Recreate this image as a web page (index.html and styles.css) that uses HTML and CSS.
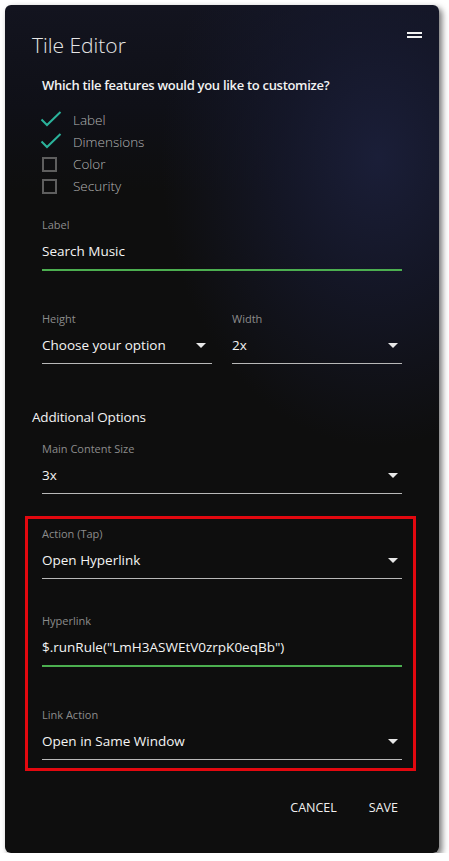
FILE: index.html
```html
<!DOCTYPE html>
<html>
<head>
<meta charset="utf-8">
<link rel="stylesheet" href="styles.css">
</head>
<body>
<div class="panel">
  <div class="header">
    <h1 class="title">Tile Editor</h1>
    <div class="menu"><span></span><span></span></div>
  </div>
  <div class="content">
    <div class="question">Which tile features would you like to customize?</div>
    <ul class="checks">
      <li class="check on"><svg class="tick" viewBox="0 0 22 16" width="22" height="16"><path d="M1.5 8.5 L7 14 L20.5 1" fill="none" stroke="#2bb39b" stroke-width="2"/></svg><span>Label</span></li>
      <li class="check on"><svg class="tick" viewBox="0 0 22 16" width="22" height="16"><path d="M1.5 8.5 L7 14 L20.5 1" fill="none" stroke="#2bb39b" stroke-width="2"/></svg><span>Dimensions</span></li>
      <li class="check"><i class="box"></i><span>Color</span></li>
      <li class="check"><i class="box"></i><span>Security</span></li>
    </ul>

    <div class="field active f-label">
      <div class="flabel">Label</div>
      <div class="fvalue">Search Music</div>
    </div>

    <div class="row">
      <div class="field select">
        <div class="flabel">Height</div>
        <div class="fvalue">Choose your option<i class="caret half"></i></div>
      </div>
      <div class="field select">
        <div class="flabel">Width</div>
        <div class="fvalue">2x<i class="caret"></i></div>
      </div>
    </div>

    <div class="section">Additional Options</div>

    <div class="field select">
      <div class="flabel">Main Content Size</div>
      <div class="fvalue">3x<i class="caret"></i></div>
    </div>

    <div class="highlight">
      <div class="field select">
        <div class="flabel">Action (Tap)</div>
        <div class="fvalue">Open Hyperlink<i class="caret"></i></div>
      </div>
      <div class="field active f-link">
        <div class="flabel">Hyperlink</div>
        <div class="fvalue">$.runRule("LmH3ASWEtV0zrpK0eqBb")</div>
      </div>
      <div class="field select f-action">
        <div class="flabel">Link Action</div>
        <div class="fvalue">Open in Same Window<i class="caret"></i></div>
      </div>
    </div>

    <div class="buttons">
      <button class="btn">CANCEL</button>
      <button class="btn">SAVE</button>
    </div>
  </div>
</div>
</body>
</html>
```

FILE: styles.css
```css
* { box-sizing: border-box; }
html, body { margin: 0; padding: 0; background: #ffffff; }
body {
  font-family: "Open Sans", "Noto Sans", "Liberation Sans", sans-serif;
  color: #eeeeee;
}
.panel {
  margin: 5px 0 0 5px;
  width: 434px;
  height: 848px;
  border-radius: 6px;
  background:
    radial-gradient(ellipse 50% 34% at 86% 18%, rgba(27,31,58,0.95) 0%, rgba(22,25,46,0.75) 45%, rgba(14,14,14,0) 100%),
    linear-gradient(180deg, #13141f 0%, #0f1017 12%, #0e0e0e 22%);
  box-shadow: 3px 3px 6px rgba(0,0,0,0.55);
  padding-top: 25px;
}
.header {
  display: flex;
  justify-content: space-between;
  align-items: flex-start;
  padding: 0 17px 0 27px;
}
.title {
  margin: 0;
  font-size: 21px;
  font-weight: 300;
  line-height: 30px;
  color: #e6e6e6;
}
.menu {
  display: flex;
  flex-direction: column;
  gap: 2px;
  width: 15px;
  margin-top: 2px;
}
.menu span { display: block; height: 2px; background: #f2f2f2; }

.content { padding: 0 37px; }
.question {
  margin-top: 15px;
  font-size: 13px;
  letter-spacing: -0.3px;
  font-weight: 600;
  line-height: 20px;
  color: #f2f2f2;
}
.checks { list-style: none; margin: 14px 0 0; padding: 0; }
.check {
  display: flex;
  align-items: center;
  height: 22px;
  font-size: 13.5px;
  font-weight: 300;
  color: #b3b3b3;
}
.check span { margin-left: 16px; }
.tick { margin-left: -2px; width: 22px; height: 16px; flex: none; margin-top: -2px; }
.check.on .tick + span { margin-left: 11px; }
.box {
  display: block;
  width: 15px;
  height: 15px;
  border: 2px solid #5e5e5e;
  flex: none;
}

.flabel {
  font-size: 11px;
  line-height: 16px;
  color: #8c8c8c;
}
.fvalue {
  position: relative;
  margin-top: 7px;
  line-height: 22px;
  height: 30px;
  padding-bottom: 7px;
  font-size: 13.5px;
  font-weight: 500;
  color: #f4f4f4;
  border-bottom: 1px solid #b8b8b8;
}
.active .fvalue { border-bottom: 2px solid #4caf50; height: 31px; }
.caret {
  position: absolute;
  right: 4px;
  top: 9px;
  width: 0;
  height: 0;
  border-left: 5px solid transparent;
  border-right: 5px solid transparent;
  border-top: 5px solid #e8e8e8;
}
.caret.half { right: 6px; }
.f-label { margin-top: 20px; }
.row {
  display: grid;
  grid-template-columns: 1fr 1fr;
  column-gap: 20px;
  margin-top: 40px;
}
.section {
  margin-top: 43px;
  margin-left: -10px;
  font-size: 13.5px;
  letter-spacing: -0.2px;
  font-weight: 500;
  line-height: 20px;
  color: #f2f2f2;
}
.section + .field { margin-top: 14px; }
.highlight {
  margin: 22px -14px 0 -17px;
  border: 3px solid #e3080f;
  padding: 7px 11px 8px 14px;
}
.f-link { margin-top: 34px; }
.f-action { margin-top: 40px; }
.buttons {
  display: flex;
  justify-content: flex-end;
  gap: 16px;
  margin-top: 23px;
  margin-right: -4px;
}
.btn {
  background: none;
  border: 0;
  padding: 4px 8px;
  font-family: inherit;
  font-size: 12.5px;
  font-weight: 500;
  line-height: 20px;
  color: #f0f0f0;
}
```
